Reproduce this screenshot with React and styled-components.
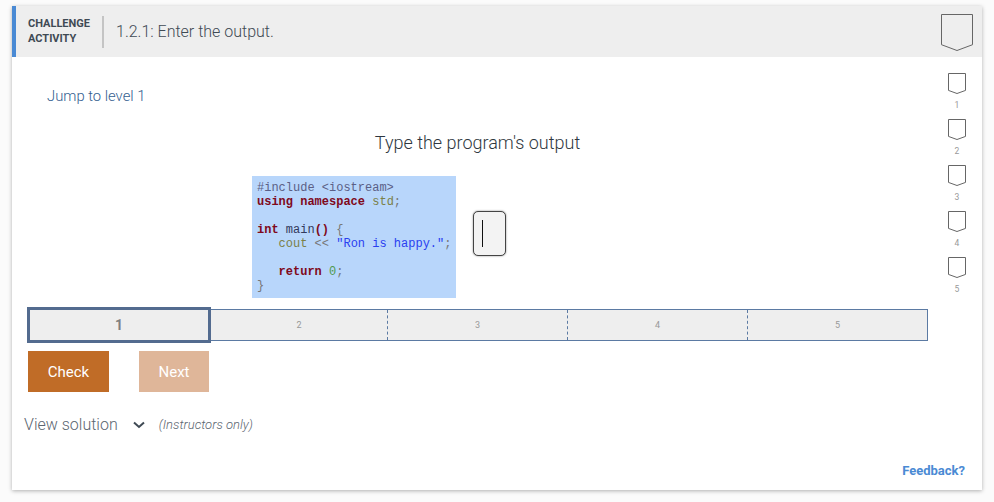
import React from 'react'
import styled, { createGlobalStyle } from 'styled-components'

const COLOR_BLUE = '#4a8ad4'
const COLOR_GREY = '#eeeeee'
const COLOR_SLATE = '#5b7aa3'
const COLOR_TEXT = '#5b6670'

const GlobalStyle = createGlobalStyle`
  html, body { margin: 0; padding: 0; background: #fbfbfb; }
  body { width: 994px; height: 502px; overflow: hidden; font-family: Roboto, "Liberation Sans", sans-serif; }
  * { box-sizing: border-box; }
`

const Page = styled.div`
  padding: 6px 12px 12px;
`

const Card = styled.div`
  display: flex;
  flex-flow: column;
  width: 970px;
  height: 484px;
  background: #fff;
  box-shadow: 0 1px 4px rgba(0, 0, 0, 0.3);
`

const Header = styled.div`
  display: flex;
  align-items: center;
  flex: none;
  height: 51px;
  padding: 0 9px 0 12px;
  background: ${COLOR_GREY};
  border-left: 4px solid ${COLOR_BLUE};
`

const HeaderLabel = styled.div`
  width: 74px;
  padding-bottom: 2px;
  font-size: 11px;
  font-weight: 700;
  line-height: 15px;
  color: #3f4a54;
`

const HeaderTitle = styled.div`
  flex: 1;
  height: 32px;
  padding-left: 12px;
  border-left: 2px solid #c4c4c4;
  font-size: 16px;
  font-weight: 300;
  line-height: 31px;
  color: #3f4a54;
`

const HeaderBadge = styled.div`
  padding-top: 2px;
`

const Body = styled.div`
  display: flex;
  flex: 1;
  min-height: 0;
`

const Main = styled.div`
  display: flex;
  flex-flow: column;
  flex: none;
  width: 923px;
`

const JumpLink = styled.div`
  margin: 30px 0 0 35px;
  font-size: 14.8px;
  font-weight: 300;
  line-height: 18px;
  color: #34608f;
`

const Prompt = styled.div`
  margin-top: 26px;
  padding-left: 8px;
  text-align: center;
  font-size: 18px;
  font-weight: 300;
  line-height: 24px;
  color: #2e3740;
`

const Exercise = styled.div`
  display: flex;
  align-items: flex-start;
  margin: 21px 0 0 240px;
`

const CodeBlock = styled.pre`
  width: 204px;
  height: 122px;
  margin: 0;
  padding: 5px 5px;
  background: #b8d6fb;
  font-family: "Liberation Mono", monospace;
  font-size: 12px;
  line-height: 14px;
  color: #777;
`

const Keyword = styled.span`
  font-weight: 700;
  color: #7f0a1c;
`
const Name = styled.span`color: #7a8048;`
const Str = styled.span`color: #2a3ff0;`
const Num = styled.span`color: #4f9a4f;`
const Plain = styled.span`color: #33395c;`
const Directive = styled.span`color: #5b5f86;`

const OutputBox = styled.div`
  display: flex;
  align-items: center;
  width: 33px;
  height: 45px;
  margin: 35px 0 0 17px;
  padding-left: 8px;
  background: #f3f3f3;
  border: 1px solid #444;
  border-radius: 5px;
  box-shadow: 0 0 2px rgba(0, 0, 0, 0.5);
  &::before {
    content: '';
    width: 1px;
    height: 27px;
    background: #111;
  }
`

const Progress = styled.div`
  display: flex;
  align-items: center;
  height: 36px;
  margin: 9px 7px 0 15px;
`

const ProgressCurrent = styled.div`
  display: flex;
  align-items: center;
  justify-content: center;
  flex: none;
  width: 184px;
  height: 36px;
  background: ${COLOR_GREY};
  border: 3px solid #536b8f;
  font-size: 14px;
  font-weight: 700;
  color: #808080;
`

const ProgressRest = styled.div`
  display: flex;
  flex: 1;
  height: 32px;
  background: ${COLOR_GREY};
  border: 1px solid ${COLOR_SLATE};
  border-left: none;
`

const ProgressStep = styled.div`
  display: flex;
  align-items: center;
  justify-content: center;
  flex: none;
  width: ${p => p.$width}px;
  border-left: ${p => (p.$first ? 'none' : `1px dashed ${COLOR_SLATE}`)};
  font-size: 9px;
  color: #999;
`

const Actions = styled.div`
  display: flex;
  gap: 30px;
  margin: 8px 0 0 16px;
`

const ActionButton = styled.div`
  display: flex;
  align-items: center;
  justify-content: center;
  width: ${p => p.$width}px;
  height: 41px;
  background: ${p => (p.$disabled ? '#dfb699' : '#c06c27')};
  font-size: 15px;
  font-weight: 400;
  color: #fff;
`

const Solution = styled.div`
  display: flex;
  align-items: center;
  height: 20px;
  margin: 22px 0 0 12px;
  color: ${COLOR_TEXT};
`

const SolutionLabel = styled.span`
  font-size: 16px;
  font-weight: 300;
`

const Caret = styled.svg`
  width: 12px;
  height: 8px;
  margin: 2px 14px 0 15px;
`

const SolutionNote = styled.span`
  font-size: 13px;
  font-weight: 300;
  font-style: italic;
`

const Feedback = styled.div`
  align-self: flex-end;
  margin: auto -30px 11px 0;
  font-size: 13px;
  font-weight: 700;
  line-height: 16px;
  color: ${COLOR_BLUE};
  white-space: nowrap;
`

const Levels = styled.div`
  display: flex;
  flex-flow: column;
  align-items: center;
  flex: none;
  width: 18px;
  margin: 16px 0 0 13px;
  gap: 1px;
`

const Level = styled.div`
  display: flex;
  flex-flow: column;
  align-items: center;
  height: 45px;
  font-size: 8.5px;
  line-height: 10px;
  color: #999;
`

const Shield = styled.svg`
  display: block;
  flex: none;
  margin-bottom: ${p => p.$gap || 0}px;
`

const Chevron = ({ width, height, gap }) => (
  <Shield $gap={gap} width={width} height={height} viewBox={`0 0 ${width} ${height}`} fill="none" stroke="#666" strokeWidth="1">
    <path d={`M.5.5H${width - 0.5}V${height - height * 0.17}L${width / 2} ${height - 0.5}L.5 ${height - height * 0.17}Z`} />
  </Shield>
)

const App = () => (
  <Page>
    <GlobalStyle />
    <Card>
      <Header>
        <HeaderLabel>CHALLENGE ACTIVITY</HeaderLabel>
        <HeaderTitle>1.2.1: Enter the output.</HeaderTitle>
        <HeaderBadge>
          <Chevron width={32} height={37} />
        </HeaderBadge>
      </Header>
      <Body>
        <Main>
          <JumpLink>Jump to level 1</JumpLink>
          <Prompt>Type the program's output</Prompt>
          <Exercise>
            <CodeBlock>
              <Directive>#include &lt;iostream&gt;</Directive>{'\n'}
              <Keyword>using namespace</Keyword> <Name>std</Name>;{'\n\n'}
              <Keyword>int</Keyword> <Plain>main</Plain><Keyword>()</Keyword> {'{'}{'\n'}
              {'   '}<Name>cout</Name> &lt;&lt; <Str>"Ron is happy."</Str>;{'\n\n'}
              {'   '}<Keyword>return</Keyword> <Num>0</Num>;{'\n'}
              {'}'}
            </CodeBlock>
            <OutputBox />
          </Exercise>
          <Progress>
            <ProgressCurrent>1</ProgressCurrent>
            <ProgressRest>
              <ProgressStep $first $width={176}>2</ProgressStep>
              <ProgressStep $width={180}>3</ProgressStep>
              <ProgressStep $width={180}>4</ProgressStep>
              <ProgressStep $width={180}>5</ProgressStep>
            </ProgressRest>
          </Progress>
          <Actions>
            <ActionButton $width={81}>Check</ActionButton>
            <ActionButton $width={70} $disabled>Next</ActionButton>
          </Actions>
          <Solution>
            <SolutionLabel>View solution</SolutionLabel>
            <Caret viewBox="0 0 12 8" fill="none" stroke="#3f4a54" strokeWidth="2">
              <path d="M1 1.5l5 4.5 5-4.5" />
            </Caret>
            <SolutionNote>(Instructors only)</SolutionNote>
          </Solution>
          <Feedback>Feedback?</Feedback>
        </Main>
        <Levels>
          {[1, 2, 3, 4, 5].map(n => (
            <Level key={n}>
              <Chevron width={18} height={21} gap={6} />
              {n}
            </Level>
          ))}
        </Levels>
      </Body>
    </Card>
  </Page>
)

export default App
